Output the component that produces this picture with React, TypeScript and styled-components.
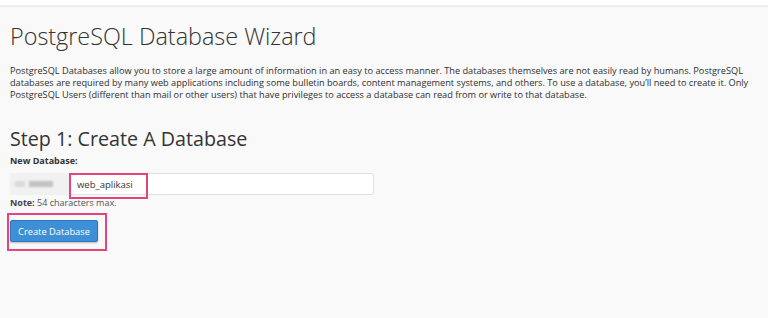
import React from 'react';
import styled, { createGlobalStyle } from 'styled-components';

const GlobalStyle = createGlobalStyle`
  html, body {
    margin: 0;
    padding: 0;
    background: #f9f9f9;
  }
  body {
    font-family: 'Open Sans', 'Liberation Sans', sans-serif;
    color: #333;
  }
`;

const TopBar = styled.div`
  height: 5px;
  background: #fff;
  border-bottom: 2px solid #eeeeee;
`;

const Page = styled.div`
  padding: 14px 10px 40px 10px;
  height: 311px;
  box-sizing: border-box;
  background: #f9f9f9;
`;

const Title = styled.h1`
  margin: 0;
  font-size: 23.4px;
  font-weight: 300;
  line-height: 30px;
  color: #333;
`;

const Intro = styled.p`
  margin: 14px 0 0;
  font-size: 9.2px;
  line-height: 12px;
  color: #2f2f2f;
  max-width: 748px;
`;

const StepTitle = styled.h2`
  margin: 25px 0 0;
  font-size: 19.7px;
  font-weight: 400;
  line-height: 26px;
  color: #333;
`;

const Label = styled.label`
  display: block;
  margin-top: 3px;
  font-size: 9px;
  font-weight: 700;
  line-height: 12px;
`;

const InputRow = styled.div`
  display: flex;
  align-items: stretch;
  width: 364px;
  height: 22px;
  margin-top: 6px;
`;

const Prefix = styled.div`
  display: flex;
  align-items: center;
  gap: 4px;
  width: 60px;
  padding-left: 5px;
  box-sizing: border-box;
  background: #f1f1f1;
  border-radius: 3px 0 0 3px;
`;

const Blur = styled.span<{ w: number; tone: string }>`
  display: block;
  width: ${p => p.w}px;
  height: 6px;
  background: ${p => p.tone};
  filter: blur(0.8px);
`;

const FieldWrap = styled.div`
  position: relative;
  flex: 1;
  display: flex;
  align-items: center;
  background: #fff;
  border: 1px solid #e1e1e1;
  border-left: none;
  border-radius: 0 3px 3px 0;
`;

const FieldText = styled.span`
  padding-left: 7px;
  font-size: 9.5px;
  color: #333;
`;

const Highlight = styled.div<{ top: number; left: number; w: number; h: number }>`
  position: absolute;
  top: ${p => p.top}px;
  left: ${p => p.left}px;
  width: ${p => p.w}px;
  height: ${p => p.h}px;
  border: 2px solid #e5457a;
  box-sizing: border-box;
  pointer-events: none;
`;

const Note = styled.div`
  margin-top: 2px;
  font-size: 9px;
  line-height: 12px;
  color: #555;
  b {
    font-weight: 700;
    color: #444;
  }
`;

const ButtonWrap = styled.div`
  position: relative;
  display: inline-block;
  margin-top: 11px;
`;

const Button = styled.button`
  display: block;
  width: 88px;
  height: 22px;
  padding: 0;
  border: 1px solid #2f78bd;
  border-radius: 2px;
  background: #3f8fd6;
  color: #fff;
  font-family: 'Open Sans', 'Liberation Sans', sans-serif;
  font-size: 9.3px;
  box-shadow: 0 1px 2px rgba(0, 0, 0, 0.25);
`;

export default function App() {
  return (
    <>
      <GlobalStyle />
      <TopBar />
      <Page>
        <Title>PostgreSQL Database Wizard</Title>
        <Intro>
          PostgreSQL Databases allow you to store a large amount of information in an easy to access manner. The
          databases themselves are not easily read by humans. PostgreSQL databases are required by many web
          applications including some bulletin boards, content management systems, and others. To use a database,
          you’ll need to create it. Only PostgreSQL Users (different than mail or other users) that have privileges
          to access a database can read from or write to that database.
        </Intro>
        <StepTitle>Step 1: Create A Database</StepTitle>
        <Label>New Database:</Label>
        <InputRow>
          <Prefix>
            <Blur w={10} tone="#d9d9d9" />
            <Blur w={24} tone="#c2c2c2" />
          </Prefix>
          <FieldWrap>
            <FieldText>web_aplikasi</FieldText>
            <Highlight top={-1} left={-1} w={79} h={26} />
          </FieldWrap>
        </InputRow>
        <Note>
          <b>Note:</b> 54 characters max.
        </Note>
        <ButtonWrap>
          <Button>Create Database</Button>
          <Highlight top={-7} left={-3} w={100} h={38} />
        </ButtonWrap>
      </Page>
    </>
  );
}
